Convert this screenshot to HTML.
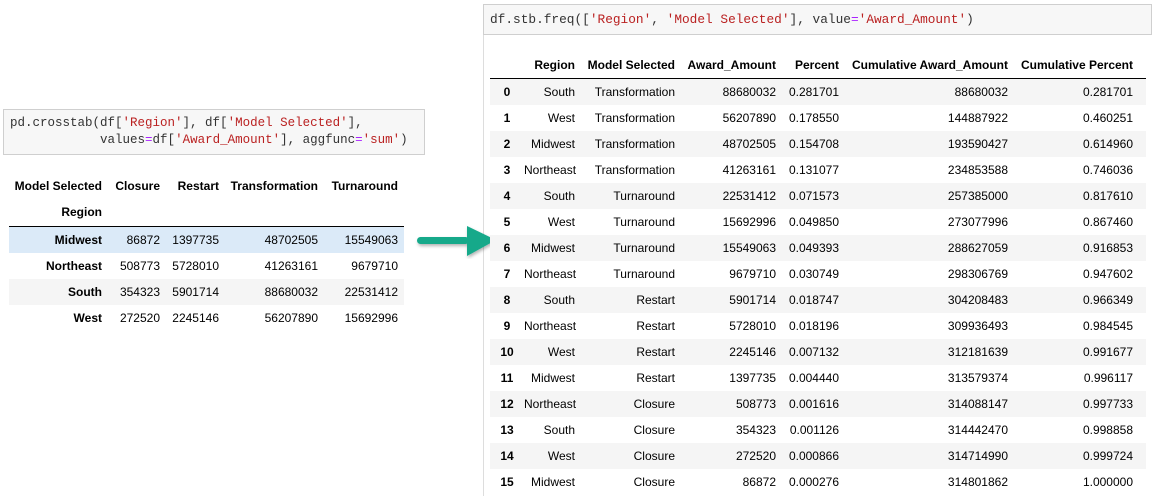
<!DOCTYPE html>
<html><head><meta charset="utf-8"><style>
body{margin:0;width:1152px;height:496px;background:#fff;position:relative;overflow:hidden;font-family:"Liberation Sans",Arial,sans-serif;font-size:12px;color:#000}
.code{position:absolute;background:#f7f7f7;border:1px solid #cfcfcf;font-family:"Liberation Mono",monospace;color:#333;white-space:pre;box-sizing:border-box}
.s{color:#ba2121}.o{color:#aa22ff}
.r{position:absolute;height:26px;line-height:26px}
.c{position:absolute;top:0;text-align:right;white-space:nowrap}
.b{font-weight:bold}
.g{background:#f5f5f5}
.hl{background:#dbeaf8}
</style></head><body>
<div class="code" style="left:3px;top:109px;width:422px;height:46px;font-size:12.5px;line-height:16.5px;padding:5px 0 0 6px">pd.crosstab(df[<span class="s">'Region'</span>], df[<span class="s">'Model Selected'</span>],
            values<span class="o">=</span>df[<span class="s">'Award_Amount'</span>], aggfunc<span class="o">=</span><span class="s">'sum'</span>)</div>

<div class="code" style="left:483px;top:4px;width:669px;height:31px;font-size:12.8px;line-height:30px;padding-left:6px">df.stb.freq([<span class="s">'Region'</span>, <span class="s">'Model Selected'</span>], value<span class="o">=</span><span class="s">'Award_Amount'</span>)</div>
<div style="position:absolute;left:483px;top:35px;width:1px;height:461px;background:#ddd"></div>

<!-- left table -->
<div class="r b" style="left:9px;top:173px;width:395px"><span class="c" style="left:0;width:93px">Model Selected</span><span class="c" style="left:93px;width:58px">Closure</span><span class="c" style="left:151px;width:59px">Restart</span><span class="c" style="left:210px;width:99px">Transformation</span><span class="c" style="left:309px;width:80px">Turnaround</span></div>
<div class="r b" style="left:9px;top:199px;width:395px"><span class="c" style="left:0;width:93px">Region</span></div>
<div style="position:absolute;left:9px;top:226px;width:395px;height:1px;background:#000"></div>
<div id="lt"></div>

<!-- arrow -->
<svg style="position:absolute;left:410px;top:220px" width="90" height="40"><defs><filter id="sh"><feDropShadow dx="1" dy="2" stdDeviation="1.5" flood-opacity="0.3"/></filter></defs><g filter="url(#sh)" fill="#12a98a"><rect x="7" y="17" width="52" height="7" rx="3.5"/><polygon points="57,6 86,20 57,36"/></g></svg>

<!-- right table header -->
<div class="r b" style="left:490px;top:52px;width:656px"><span class="c" style="left:34px;width:51px">Region</span><span class="c" style="left:85px;width:100px">Model Selected</span><span class="c" style="left:185px;width:101px">Award_Amount</span><span class="c" style="left:286px;width:63px">Percent</span><span class="c" style="left:349px;width:169px">Cumulative Award_Amount</span><span class="c" style="left:518px;width:125px">Cumulative Percent</span></div>
<div style="position:absolute;left:490px;top:78px;width:656px;height:1px;background:#000"></div>

<div class="r hl" style="left:9px;top:227px;width:395px"><span class="c b" style="left:0;width:93px">Midwest</span><span class="c" style="left:93px;width:58px">86872</span><span class="c" style="left:151px;width:59px">1397735</span><span class="c" style="left:210px;width:99px">48702505</span><span class="c" style="left:309px;width:80px">15549063</span></div>
<div class="r" style="left:9px;top:253px;width:395px"><span class="c b" style="left:0;width:93px">Northeast</span><span class="c" style="left:93px;width:58px">508773</span><span class="c" style="left:151px;width:59px">5728010</span><span class="c" style="left:210px;width:99px">41263161</span><span class="c" style="left:309px;width:80px">9679710</span></div>
<div class="r g" style="left:9px;top:279px;width:395px"><span class="c b" style="left:0;width:93px">South</span><span class="c" style="left:93px;width:58px">354323</span><span class="c" style="left:151px;width:59px">5901714</span><span class="c" style="left:210px;width:99px">88680032</span><span class="c" style="left:309px;width:80px">22531412</span></div>
<div class="r" style="left:9px;top:305px;width:395px"><span class="c b" style="left:0;width:93px">West</span><span class="c" style="left:93px;width:58px">272520</span><span class="c" style="left:151px;width:59px">2245146</span><span class="c" style="left:210px;width:99px">56207890</span><span class="c" style="left:309px;width:80px">15692996</span></div>

<div class="r g" style="left:490px;top:79px;width:656px"><span class="c b" style="left:0;width:34px;text-align:center">0</span><span class="c" style="left:34px;width:51px">South</span><span class="c" style="left:85px;width:100px">Transformation</span><span class="c" style="left:185px;width:101px">88680032</span><span class="c" style="left:286px;width:63px">0.281701</span><span class="c" style="left:349px;width:169px">88680032</span><span class="c" style="left:518px;width:125px">0.281701</span></div>
<div class="r" style="left:490px;top:105px;width:656px"><span class="c b" style="left:0;width:34px;text-align:center">1</span><span class="c" style="left:34px;width:51px">West</span><span class="c" style="left:85px;width:100px">Transformation</span><span class="c" style="left:185px;width:101px">56207890</span><span class="c" style="left:286px;width:63px">0.178550</span><span class="c" style="left:349px;width:169px">144887922</span><span class="c" style="left:518px;width:125px">0.460251</span></div>
<div class="r g" style="left:490px;top:131px;width:656px"><span class="c b" style="left:0;width:34px;text-align:center">2</span><span class="c" style="left:34px;width:51px">Midwest</span><span class="c" style="left:85px;width:100px">Transformation</span><span class="c" style="left:185px;width:101px">48702505</span><span class="c" style="left:286px;width:63px">0.154708</span><span class="c" style="left:349px;width:169px">193590427</span><span class="c" style="left:518px;width:125px">0.614960</span></div>
<div class="r" style="left:490px;top:157px;width:656px"><span class="c b" style="left:0;width:34px;text-align:center">3</span><span class="c" style="left:34px;width:51px">Northeast</span><span class="c" style="left:85px;width:100px">Transformation</span><span class="c" style="left:185px;width:101px">41263161</span><span class="c" style="left:286px;width:63px">0.131077</span><span class="c" style="left:349px;width:169px">234853588</span><span class="c" style="left:518px;width:125px">0.746036</span></div>
<div class="r g" style="left:490px;top:183px;width:656px"><span class="c b" style="left:0;width:34px;text-align:center">4</span><span class="c" style="left:34px;width:51px">South</span><span class="c" style="left:85px;width:100px">Turnaround</span><span class="c" style="left:185px;width:101px">22531412</span><span class="c" style="left:286px;width:63px">0.071573</span><span class="c" style="left:349px;width:169px">257385000</span><span class="c" style="left:518px;width:125px">0.817610</span></div>
<div class="r" style="left:490px;top:209px;width:656px"><span class="c b" style="left:0;width:34px;text-align:center">5</span><span class="c" style="left:34px;width:51px">West</span><span class="c" style="left:85px;width:100px">Turnaround</span><span class="c" style="left:185px;width:101px">15692996</span><span class="c" style="left:286px;width:63px">0.049850</span><span class="c" style="left:349px;width:169px">273077996</span><span class="c" style="left:518px;width:125px">0.867460</span></div>
<div class="r g" style="left:490px;top:235px;width:656px"><span class="c b" style="left:0;width:34px;text-align:center">6</span><span class="c" style="left:34px;width:51px">Midwest</span><span class="c" style="left:85px;width:100px">Turnaround</span><span class="c" style="left:185px;width:101px">15549063</span><span class="c" style="left:286px;width:63px">0.049393</span><span class="c" style="left:349px;width:169px">288627059</span><span class="c" style="left:518px;width:125px">0.916853</span></div>
<div class="r" style="left:490px;top:261px;width:656px"><span class="c b" style="left:0;width:34px;text-align:center">7</span><span class="c" style="left:34px;width:51px">Northeast</span><span class="c" style="left:85px;width:100px">Turnaround</span><span class="c" style="left:185px;width:101px">9679710</span><span class="c" style="left:286px;width:63px">0.030749</span><span class="c" style="left:349px;width:169px">298306769</span><span class="c" style="left:518px;width:125px">0.947602</span></div>
<div class="r g" style="left:490px;top:287px;width:656px"><span class="c b" style="left:0;width:34px;text-align:center">8</span><span class="c" style="left:34px;width:51px">South</span><span class="c" style="left:85px;width:100px">Restart</span><span class="c" style="left:185px;width:101px">5901714</span><span class="c" style="left:286px;width:63px">0.018747</span><span class="c" style="left:349px;width:169px">304208483</span><span class="c" style="left:518px;width:125px">0.966349</span></div>
<div class="r" style="left:490px;top:313px;width:656px"><span class="c b" style="left:0;width:34px;text-align:center">9</span><span class="c" style="left:34px;width:51px">Northeast</span><span class="c" style="left:85px;width:100px">Restart</span><span class="c" style="left:185px;width:101px">5728010</span><span class="c" style="left:286px;width:63px">0.018196</span><span class="c" style="left:349px;width:169px">309936493</span><span class="c" style="left:518px;width:125px">0.984545</span></div>
<div class="r g" style="left:490px;top:339px;width:656px"><span class="c b" style="left:0;width:34px;text-align:center">10</span><span class="c" style="left:34px;width:51px">West</span><span class="c" style="left:85px;width:100px">Restart</span><span class="c" style="left:185px;width:101px">2245146</span><span class="c" style="left:286px;width:63px">0.007132</span><span class="c" style="left:349px;width:169px">312181639</span><span class="c" style="left:518px;width:125px">0.991677</span></div>
<div class="r" style="left:490px;top:365px;width:656px"><span class="c b" style="left:0;width:34px;text-align:center">11</span><span class="c" style="left:34px;width:51px">Midwest</span><span class="c" style="left:85px;width:100px">Restart</span><span class="c" style="left:185px;width:101px">1397735</span><span class="c" style="left:286px;width:63px">0.004440</span><span class="c" style="left:349px;width:169px">313579374</span><span class="c" style="left:518px;width:125px">0.996117</span></div>
<div class="r g" style="left:490px;top:391px;width:656px"><span class="c b" style="left:0;width:34px;text-align:center">12</span><span class="c" style="left:34px;width:51px">Northeast</span><span class="c" style="left:85px;width:100px">Closure</span><span class="c" style="left:185px;width:101px">508773</span><span class="c" style="left:286px;width:63px">0.001616</span><span class="c" style="left:349px;width:169px">314088147</span><span class="c" style="left:518px;width:125px">0.997733</span></div>
<div class="r" style="left:490px;top:417px;width:656px"><span class="c b" style="left:0;width:34px;text-align:center">13</span><span class="c" style="left:34px;width:51px">South</span><span class="c" style="left:85px;width:100px">Closure</span><span class="c" style="left:185px;width:101px">354323</span><span class="c" style="left:286px;width:63px">0.001126</span><span class="c" style="left:349px;width:169px">314442470</span><span class="c" style="left:518px;width:125px">0.998858</span></div>
<div class="r g" style="left:490px;top:443px;width:656px"><span class="c b" style="left:0;width:34px;text-align:center">14</span><span class="c" style="left:34px;width:51px">West</span><span class="c" style="left:85px;width:100px">Closure</span><span class="c" style="left:185px;width:101px">272520</span><span class="c" style="left:286px;width:63px">0.000866</span><span class="c" style="left:349px;width:169px">314714990</span><span class="c" style="left:518px;width:125px">0.999724</span></div>
<div class="r" style="left:490px;top:469px;width:656px"><span class="c b" style="left:0;width:34px;text-align:center">15</span><span class="c" style="left:34px;width:51px">Midwest</span><span class="c" style="left:85px;width:100px">Closure</span><span class="c" style="left:185px;width:101px">86872</span><span class="c" style="left:286px;width:63px">0.000276</span><span class="c" style="left:349px;width:169px">314801862</span><span class="c" style="left:518px;width:125px">1.000000</span></div>
</body></html>
